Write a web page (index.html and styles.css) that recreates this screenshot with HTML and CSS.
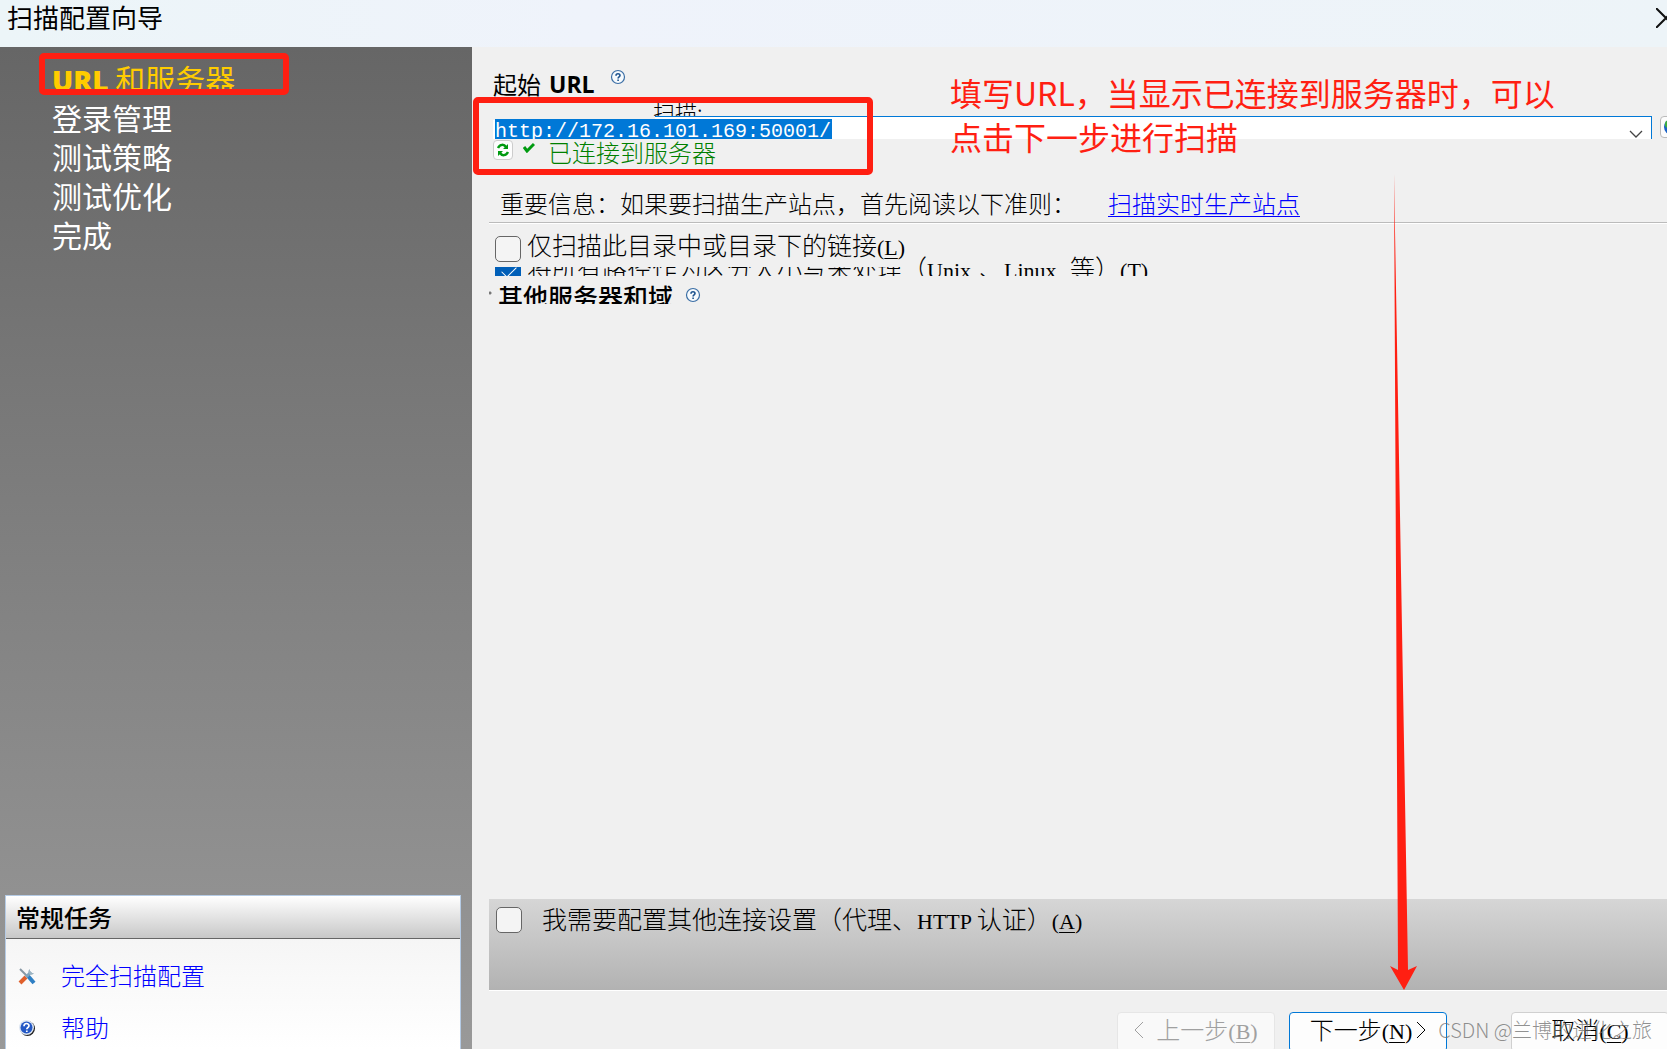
FILE: index.html
```html
<!DOCTYPE html>
<html lang="zh-CN">
<head>
    <meta charset="UTF-8">
    <meta name="viewport" content="width=device-width, initial-scale=1.0">
    <title>扫描配置向导</title>
    <link rel="stylesheet" href="styles.css">
</head>
<body>
    <header class="titlebar">
        <h1>扫描配置向导</h1>
        <button class="close" type="button" aria-label="关闭">
            <svg width="20" height="20" viewBox="0 0 20 20"><path d="M0 0L20 20M20 0L0 20" stroke="#111" stroke-width="2"/></svg>
        </button>
    </header>

    <div class="window">
        <aside class="sidebar">
            <nav class="steps">
                <a class="active" href="#url"><b>URL</b> 和服务器</a>
                <a href="#login">登录管理</a>
                <a href="#policy">测试策略</a>
                <a href="#optimize">测试优化</a>
                <a href="#finish">完成</a>
            </nav>
            <section class="tasks">
                <h2>常规任务</h2>
                <a href="#full">
                    <svg width="18" height="18" viewBox="0 0 18 18">
                        <path d="M2 2l8 8" stroke="#8798a5" stroke-width="2"/>
                        <path d="M10 9l6 7" stroke="#2f7fc4" stroke-width="4"/>
                        <path d="M8 10l-6 6" stroke="#e0602c" stroke-width="4"/>
                        <path d="M8 10l5-5" stroke="#7fa6bf" stroke-width="3"/>
                        <path d="M12 2a3 3 0 1 0 4 4l-2 0-2-2z" fill="#9db4c2"/>
                    </svg>
                    <span>完全扫描配置</span>
                </a>
                <a href="#help">
                    <svg width="18" height="18" viewBox="0 0 18 18">
                        <circle cx="9.500" cy="9.500" r="7.500" fill="#222"/>
                        <circle cx="8.500" cy="8.500" r="7.500" fill="#dde6f2"/>
                        <circle cx="8.500" cy="8.500" r="6" fill="#2458c5"/>
                        <path d="M6 7.200c0-3.600 5-3.400 5-.4 0 1.800-2.200 1.500-2.200 3.400M8.800 11.400v1.600" fill="none" stroke="#fff" stroke-width="1.700"/>
                    </svg>
                    <span>帮助</span>
                </a>
            </section>
        </aside>

        <main class="content">
            <h2 class="start">起始 <b>URL</b>
                <svg class="hint" width="16" height="16" viewBox="0 0 16 16"><circle cx="8" cy="8" r="6.500" fill="#f6fafd" stroke="#3a6ea5" stroke-width="1.200"/><path d="M6 6.700c0-2.700 4-2.500 4-.2 0 1.400-1.900 1.400-1.900 2.900M8.100 10.400v1.500" fill="none" stroke="#1f5590" stroke-width="1.600"/></svg>
            </h2>
            <label class="scan-label" for="url">扫描:</label>
            <div class="url-row">
                <div class="combo">
                    <input id="url" type="text" value="http://172.16.101.169:50001/">
                    <button type="button" aria-label="展开">
                        <svg width="14" height="8" viewBox="0 0 14 8"><path d="M1 1l6 6 6-6" fill="none" stroke="#444" stroke-width="1.300"/></svg>
                    </button>
                </div>
                <button class="browser" type="button" aria-label="浏览器">
                    <svg width="16" height="16" viewBox="0 0 16 16"><circle cx="8" cy="8" r="8" fill="#1a62c6"/><path d="M1 4c2-4 7-5 9-3L6 6 3 9 1 7z" fill="#3fae3f"/></svg>
                </button>
            </div>
            <div class="status">
                <button type="button" aria-label="刷新">
                    <svg width="14" height="14" viewBox="0 0 14 14" fill="none" stroke="#009a10" stroke-width="2.500"><path d="M2 5c2-4 6-4 8-1M12 9c-2 4-6 4-8 1"/><path d="M12 1v5H7zM2 13V8h5z" fill="#009a10" stroke="none"/></svg>
                </button>
                <svg width="12" height="11" viewBox="0 0 12 11"><path d="M1 5l3 4 7-7" fill="none" stroke="#009a10" stroke-width="3"/></svg>
                <span>已连接到服务器</span>
            </div>
            <p class="info">重要信息：如果要扫描生产站点，首先阅读以下准则：<a href="#live">扫描实时生产站点</a></p>

            <div class="option first">
                <input id="only" type="checkbox">
                <label for="only">仅扫描此目录中或目录下的链接<span class="en">(<u>L</u>)</span></label>
            </div>
            <div class="option second">
                <input id="case" type="checkbox" checked>
                <label for="case">将所有路径作为区分大小写来处理（<span class="en">Unix</span>、<span class="en">Linux </span>等）<span class="en">(T)</span></label>
            </div>
            <h3 class="others">其他服务器和域
                <svg class="hint" width="16" height="16" viewBox="0 0 16 16"><circle cx="8" cy="8" r="6.500" fill="#f6fafd" stroke="#3a6ea5" stroke-width="1.200"/><path d="M6 6.700c0-2.700 4-2.500 4-.2 0 1.400-1.900 1.400-1.900 2.900M8.100 10.400v1.500" fill="none" stroke="#1f5590" stroke-width="1.600"/></svg>
            </h3>

            <div class="extra">
                <input id="conn" type="checkbox">
                <label for="conn">我需要配置其他连接设置（代理、<span class="en">HTTP </span>认证）<span class="en">(<u>A</u>)</span></label>
            </div>

            <footer class="buttons">
                <button type="button" disabled><svg width="10" height="18" viewBox="0 0 10 18"><path d="M9 1L1 9l8 8"/></svg><span>上一步<span class="en">(<u>B</u>)</span></span></button>
                <button class="next" type="button"><span>下一步<span class="en">(<u>N</u>)</span></span><svg width="10" height="18" viewBox="0 0 10 18"><path d="M1 1l8 8-8 8"/></svg></button>
                <button class="cancel" type="button"><span>取消<span class="en">(<u>C</u>)</span></span></button>
            </footer>
        </main>
    </div>

    <!-- notas en rojo -->
    <div class="mark mark-step"></div>
    <div class="mark mark-url"></div>
    <p class="note">填写URL，当显示已连接到服务器时，可以<br>点击下一步进行扫描</p>
    <svg class="arrow" width="30" height="816" viewBox="0 0 30 816"><path d="M6 0L20 796 29 792 16 816 2 792 10 796z" fill="#ff1f12"/></svg>
    <div class="watermark">CSDN @兰博的进化之旅</div>
</body>
</html>
```

FILE: styles.css
```css
* {
    box-sizing: border-box;
}
body {
    margin: 0;
    height: 100vh;
    display: flex;
    flex-direction: column;
    position: relative;
    overflow: hidden;
    background: #f0f0f0;
    color: #000;
    font-family: "Noto Sans CJK SC", sans-serif;
    font-size: 24px;
    font-weight: 300;
}
h1, h2, h3, p {
    margin: 0;
}
button {
    padding: 0;
    font: inherit;
}
svg {
    flex: none;
}
.en {
    font-family: "Liberation Serif", serif;
    font-size: 22px;
    white-space: pre;
}
u {
    text-underline-offset: 3px;
    text-decoration-thickness: 1px;
}

/* barra de titulo */
.titlebar {
    flex: none;
    height: 47px;
    padding-left: 7px;
    display: flex;
    justify-content: space-between;
    align-items: flex-start;
    background: linear-gradient(90deg, #ecf5f8, #eff3fb 35%, #edf4f8);
}
.titlebar h1 {
    font-size: 26px;
    font-weight: 400;
    line-height: 34px;
}
.close {
    margin: 8px -9px 0 0;
    height: 20px;
    border: 0;
    background: none;
    display: flex;
}

.window {
    flex: 1;
    min-height: 0;
    display: flex;
}

/* menu lateral */
.sidebar {
    flex: none;
    width: 472px;
    display: flex;
    flex-direction: column;
    justify-content: space-between;
    padding: 12px 11px 0 5px;
    background: linear-gradient(#666, #999);
}
.steps {
    display: flex;
    flex-direction: column;
    padding-left: 47px;
}
.steps a {
    height: 39px;
    line-height: 38px;
    font-size: 30px;
    font-weight: 400;
    color: #fff;
    text-decoration: none;
}
.steps .active {
    color: #ffcc00;
}
b {
    font-family: "Open Sans", sans-serif;
    font-weight: 700;
}
.steps b {
    font-weight: 800;
    font-size: 28px;
}
.tasks {
    height: 154px;
    border: 1px solid #b5cbe5;
    border-bottom: 0;
    background: linear-gradient(#f2f2f2, #fff);
}
.tasks h2 {
    height: 43px;
    padding-left: 10px;
    border-bottom: 1px solid #666;
    background: linear-gradient(#fff, #c8c8c8);
    font-size: 24px;
    font-weight: 500;
    line-height: 42px;
}
.tasks a {
    display: flex;
    align-items: center;
    gap: 25px;
    height: 52px;
    padding-left: 12px;
    color: #0000ff;
    text-decoration: none;
}
.tasks a span {
    padding-bottom: 4px;
}
.tasks h2 + a {
    margin-top: 11px;
}

/* contenido */
.content {
    flex: 1;
    min-width: 0;
    display: flex;
    flex-direction: column;
    padding-left: 17px;
}
.start {
    flex: none;
    display: flex;
    align-items: center;
    gap: 8px;
    height: 50px;
    padding: 24px 0 0 4px;
    font-size: 24px;
    font-weight: 400;
    line-height: 26px;
}
.start b {
    font-size: 23px;
}
.start .hint {
    margin: 0 0 14px 7px;
}
.scan-label {
    height: 19px;
    margin-left: 164px;
    overflow: hidden;
    font-size: 22px;
    line-height: 28px;
}
.url-row {
    flex: none;
    display: flex;
    gap: 8px;
    height: 23px;
    margin: 0 -17px 0 3px;
}
.combo {
    flex: 1;
    display: flex;
    justify-content: space-between;
    align-items: flex-end;
    padding: 0 6px 0 2px;
    border: solid #0078d7;
    border-width: 0 1px;
    border-left-color: transparent;
    background:
        linear-gradient(#0078d7, #0078d7) 162px 0 / 100% 1px no-repeat,
        linear-gradient(#fff, #fff) 162px 0 / 100% 4px no-repeat,
        linear-gradient(#fff, #fff) 0 4px / 100% 100% no-repeat;
}
.combo input {
    width: 337px;
    height: 20px;
    padding: 5px 0 0;
    border: 0;
    outline: 0;
    background: #0078d7;
    color: #fff;
    font-family: "Liberation Mono", monospace;
    font-size: 20px;
    line-height: 20px;
}
.combo button {
    height: 23px;
    padding: 10px 2px 0;
    border: 0;
    background: none;
    line-height: 0;
}
.browser {
    width: 24px;
    height: 22px;
    border: 1px solid #bbb;
    border-radius: 4px;
    background: #fcfcfc;
    display: flex;
    align-items: center;
    justify-content: center;
}
.status {
    flex: none;
    display: flex;
    align-items: flex-start;
    height: 28px;
    padding-left: 4px;
    color: #008000;
    line-height: 26px;
}
.status button {
    display: flex;
    align-items: center;
    justify-content: center;
    width: 20px;
    height: 20px;
    margin-top: 1px;
    border: 1px solid #ccc;
    border-radius: 4px;
    background: #fdfdfd;
}
.status > svg {
    margin: 3px 13px 0 10px;
}
.info {
    flex: none;
    height: 38px;
    margin-top: 18px;
    padding-left: 11px;
    border-bottom: 1px solid #bbb;
    box-shadow: 0 1px #fff;
    line-height: 35px;
    white-space: nowrap;
}
.info a {
    margin-left: 32px;
    color: #0000ff;
    text-underline-offset: 3px;
    text-decoration-thickness: 1px;
}
.option {
    flex: none;
    display: flex;
    gap: 6px;
    padding-left: 6px;
    font-size: 25px;
    line-height: 26px;
    white-space: nowrap;
}
input[type="checkbox"] {
    appearance: none;
    flex: none;
    width: 26px;
    height: 26px;
    margin: 0;
    border: 1px solid #666;
    border-radius: 5px;
    background: #f4f4f4;
}
input[type="checkbox"]:checked {
    border-color: #005fb8;
    background: #005fb8;
}
input[type="checkbox"]:checked::before {
    content: "";
    display: block;
    width: 13px;
    height: 7px;
    margin: 9px 6px;
    border: solid #fff;
    border-width: 0 0 1px 1px;
    transform: rotate(-45deg);
}
.first {
    position: relative;
    z-index: 1;
    align-self: flex-start;
    height: 42px;
    margin-top: 2px;
    padding-top: 6px;
    background: #f0f0f0;
}
.first input {
    margin-top: 5px;
}
/* la segunda opcion queda tapada por la primera */
.second {
    height: 20px;
    margin-top: -11px;
    overflow: hidden;
    line-height: 22px;
}
.second .en {
    margin-right: 8px;
}
.others {
    flex: none;
    display: flex;
    gap: 12px;
    height: 28px;
    padding: 8px 0 0 9px;
    overflow: hidden;
    background: radial-gradient(circle at 1px 17px, #777 1px, transparent 2px);
    font-size: 25px;
    font-weight: 500;
    line-height: 24px;
}
.others .hint {
    margin-top: 3px;
}
.extra {
    flex: none;
    display: flex;
    gap: 20px;
    height: 92px;
    margin-top: auto;
    padding: 8px 0 0 7px;
    border-bottom: 1px solid #fff;
    background: linear-gradient(#d6d6d6, #b2b2b2);
    font-size: 25px;
    line-height: 22px;
    white-space: nowrap;
}
.buttons {
    flex: none;
    display: flex;
    justify-content: flex-end;
    height: 58px;
    padding-top: 21px;
    margin-right: -2px;
}
.buttons button {
    display: flex;
    align-items: center;
    justify-content: center;
    flex: none;
    gap: 12px;
    width: 158px;
    height: 40px;
    padding-bottom: 4px;
    border: 1px solid #d0d0d0;
    border-radius: 4px;
    background: #fdfdfd;
    color: #000;
    line-height: 32px;
}
.buttons svg {
    fill: none;
    stroke: currentColor;
}
.buttons button:disabled {
    border-color: #e6e6e6;
    background: #f9f9f9;
    color: #a0a0a0;
}
.buttons .next {
    gap: 4px;
    margin: 0 64px 0 14px;
    border-color: #0078d7;
}

/* anotaciones encima de la ventana */
.mark {
    position: absolute;
    border: 6px solid #ff1f12;
    border-radius: 5px;
    z-index: 5;
}
.mark-step {
    left: 39px;
    top: 53px;
    width: 250px;
    height: 42px;
}
.mark-url {
    left: 473px;
    top: 97px;
    width: 400px;
    height: 78px;
}
.note {
    position: absolute;
    left: 950px;
    top: 70px;
    z-index: 5;
    color: #ff1f12;
    font-size: 32px;
    font-weight: 400;
    line-height: 44px;
    white-space: nowrap;
}
.arrow {
    position: absolute;
    left: 1388px;
    top: 174px;
    z-index: 5;
}
.watermark {
    position: absolute;
    right: 15px;
    bottom: 4px;
    z-index: 5;
    color: rgba(110, 110, 110, 0.75);
    font-size: 20px;
    line-height: 30px;
}
```
